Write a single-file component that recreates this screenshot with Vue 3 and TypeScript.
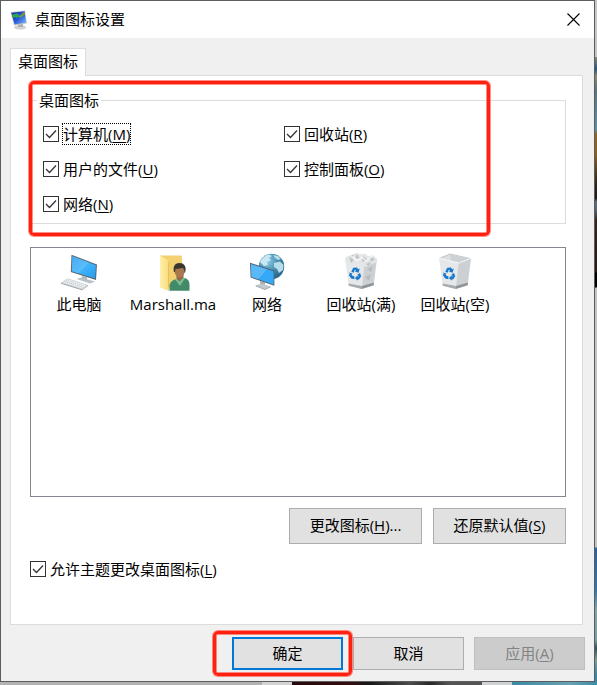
<script setup lang="ts">
import { reactive, ref } from 'vue'

interface DesktopOption {
  id: string
  label: string
  key: string
  checked: boolean
}

interface DesktopIcon {
  id: string
  label: string
}

const options = reactive<DesktopOption[]>([
  { id: 'computer', label: '计算机', key: 'M', checked: true },
  { id: 'recycle', label: '回收站', key: 'R', checked: true },
  { id: 'files', label: '用户的文件', key: 'U', checked: true },
  { id: 'control', label: '控制面板', key: 'O', checked: true },
  { id: 'network', label: '网络', key: 'N', checked: true },
])

const icons: DesktopIcon[] = [
  { id: 'pc', label: '此电脑' },
  { id: 'user', label: 'Marshall.ma' },
  { id: 'net', label: '网络' },
  { id: 'full', label: '回收站(满)' },
  { id: 'empty', label: '回收站(空)' },
]

const focused = ref('computer')
const allowThemes = ref(true)
</script>

<template>
  <div class="desktop">
    <main class="window">
      <header class="titlebar">
        <svg class="app-icon" viewBox="0 0 18 20" aria-hidden="true">
          <defs>
            <linearGradient id="app-screen" x1="0" y1="0" x2="1" y2="1">
              <stop offset="0" stop-color="#1b2f9c" />
              <stop offset="0.5" stop-color="#2456d8" />
              <stop offset="1" stop-color="#8fc2f8" />
            </linearGradient>
          </defs>
          <ellipse cx="10" cy="17.3" rx="6" ry="2.3" fill="#d2d2d2" />
          <path d="M8 14 L13 13 L13 17 L8 17Z" fill="#b0b0b0" />
          <path d="M0.5 2 L15 0.5 L17 13.5 L4 15.5Z" fill="#c8ccd0" />
          <path d="M1.3 2.8 L14.5 1.3 L16.2 12.7 L4.6 14.5Z" fill="url(#app-screen)" />
          <path d="M2 4.5 L8 3.5 L9 6 L7 8 L5 7 L3 8Z" fill="#2fa84a" />
          <path d="M8 7 L14 2 L15 4 L11 7.5Z" fill="#4db848" />
          <path d="M10.5 6.5 L14.3 2.5" stroke="#d9532c" stroke-width="1" />
        </svg>
        <h1 class="title">桌面图标设置</h1>
        <button class="close" type="button" aria-label="关闭">
          <svg viewBox="0 0 13 13" aria-hidden="true">
            <path d="M0.5 0.5 L12.5 12.5 M12.5 0.5 L0.5 12.5" stroke="#000" stroke-width="1.1" />
          </svg>
        </button>
      </header>

      <div class="body">
        <div class="tabs" role="tablist">
          <button class="tab" type="button" role="tab" aria-selected="true">桌面图标</button>
        </div>

        <section class="panel">
          <div class="group-wrap">
            <fieldset class="group">
              <legend>桌面图标</legend>
              <div class="options">
                <label v-for="o in options" :key="o.id" class="option">
                  <span class="tick">
                    <input v-model="o.checked" type="checkbox" @focus="focused = o.id" />
                    <svg v-show="o.checked" viewBox="0 0 16 16" aria-hidden="true">
                      <path d="M3 8 L6.5 11.5 L13 4.5" />
                    </svg>
                  </span>
                  <span class="caption" :class="{ focused: focused === o.id }">{{ o.label }}(<u>{{ o.key }}</u>)</span>
                </label>
              </div>
            </fieldset>
            <span class="mark mark-group"></span>
          </div>

          <ul class="icon-list">
            <li v-for="i in icons" :key="i.id" class="icon-item">
              <svg v-if="i.id === 'pc'" class="icon" viewBox="0 0 40 40" aria-hidden="true">
                <defs>
                  <linearGradient id="pc-screen" x1="0" y1="0" x2="1" y2="1">
                    <stop offset="0" stop-color="#2f9ff0" />
                    <stop offset="0.5" stop-color="#43b4fb" />
                    <stop offset="1" stop-color="#249cf0" />
                  </linearGradient>
                </defs>
                <path d="M23 24 L28 25.5 L28 29 L23 28Z" fill="#a9b2b8" />
                <path d="M17.5 27 L22 25.5 L36 29.5 L31 31.5Z" fill="#b9c2c8" />
                <path d="M12.5 2.8 L38 12.6 L37 28 L11.8 20Z" fill="#59666f" />
                <path d="M13.3 4 L37 13.2 L36 26.5 L12.8 19.2Z" fill="url(#pc-screen)" />
                <path d="M13.3 4 L30 10.5 L19 21.2 L12.8 19.2Z" fill="#fff" opacity="0.12" />
                <path d="M2 30.8 L8.5 26.3 L29 33 L23 37.2Z" fill="#cbd2d6" />
                <path d="M2 30.8 L23 37.2 L29 33 L29 34 L23 38.2 L2 31.8Z" fill="#98a3aa" />
                <path d="M4.5 30.2 L24.5 36.2 M6.3 28.8 L26.2 35 M8 27.6 L27.5 33.8" stroke="#fff" stroke-width="0.9" stroke-dasharray="1.6 0.6" />
              </svg>

              <svg v-else-if="i.id === 'user'" class="icon" viewBox="0 0 40 40" aria-hidden="true">
                <defs>
                  <linearGradient id="folder" x1="0" y1="0" x2="1" y2="0">
                    <stop offset="0" stop-color="#fff0ae" />
                    <stop offset="1" stop-color="#fbdc7b" />
                  </linearGradient>
                </defs>
                <path d="M7 3.5 H28 L29 4.5 V35.5 H7Z" fill="#f3d070" />
                <path d="M7 3.5 L13.8 7.5 Q15.5 8.5 15.5 10.5 V38.7 L7 35.6Z" fill="url(#folder)" />
                <path d="M15.5 10.5 V38.7" stroke="#d9b34f" stroke-width="0.6" />
                <path d="M16.5 38.7 V33.5 Q17 29 22.5 27.3 L32 26 Q36.3 27.5 36.5 32 V38.7Z" fill="#438b68" />
                <path d="M23.5 23 V27.5 L26.5 30.5 L30.5 26.5 V22Z" fill="#97683f" />
                <path d="M22 27.3 L23.5 26.5 L26.5 29.5 L30.5 25.5 L32 26.2 L27 34Z" fill="#74bf98" />
                <ellipse cx="26.6" cy="19.3" rx="4.8" ry="6.3" fill="#a97750" />
                <path d="M20.8 19.5 Q19.5 11.5 25.8 11 Q33.8 10.6 32.4 19.5 L31.3 21.5 Q31.6 17 29.5 15.8 Q25 17.2 22.6 16.4 L21.9 20.5Z" fill="#37362f" />
              </svg>

              <svg v-else-if="i.id === 'net'" class="icon" viewBox="0 0 40 40" aria-hidden="true">
                <defs>
                  <radialGradient id="globe" cx="0.35" cy="0.3" r="0.8">
                    <stop offset="0" stop-color="#8fcbe4" />
                    <stop offset="0.5" stop-color="#4590b4" />
                    <stop offset="1" stop-color="#1f5b80" />
                  </radialGradient>
                </defs>
                <circle cx="24.5" cy="14.5" r="12.7" fill="url(#globe)" />
                <path d="M13 10 Q16 4 22 2.5 L25 4 L22 6 L24 8 L20 10 L21 13 L17 14Z" fill="#c9e7f2" />
                <path d="M26 3 L31 4 L34 7 L31 8 L28 6Z M27 11 L33 9.5 L36.6 13 L36 18 L32 21 L30 17 L27 15Z" fill="#b9dcea" />
                <path d="M13 34 V29 L18 30.5 V35Z" fill="#aab3b9" />
                <path d="M8.7 33.3 L14 31.7 L23.5 34.3 L18 37Z" fill="#c2cace" />
                <path d="M8.7 33.3 L18 37 L23.5 34.3 V35.2 L18 38 L8.7 34.3Z" fill="#929da4" />
                <path d="M3 10.8 L27.4 18.6 V33.8 L3.6 25.6Z" fill="#50606b" />
                <path d="M3.8 12 L26.6 19.3 V32.4 L4.4 25Z" fill="#35a9f7" />
                <path d="M3.8 12 L20 17.2 L11 27.2 L4.4 25Z" fill="#fff" opacity="0.18" />
              </svg>

              <svg v-else class="icon" viewBox="0 0 40 40" aria-hidden="true">
                <path d="M4 6 L15 1.5 L36 6.3 L23.5 11Z" fill="#c2c5c9" />
                <path d="M6 6.2 L15.3 2.5 L33.7 6.5 L23.4 10Z" fill="#dcdee0" />
                <path d="M15.3 2.5 L16 8.3 L23.4 10 L33.7 6.5Z" fill="#ced1d4" />
                <path d="M4 6 L23.5 11 L20.7 37 L7.8 33.8Z" fill="#e5e7e9" />
                <path d="M23.5 11 L36 6.3 L32.7 33.3 L20.7 37Z" fill="#cdd0d3" />
                <path d="M7.5 31.5 L21 34 L20.7 37 L7.8 33.8Z" fill="#a7abae" />
                <path d="M21 34 L33 30.5 L32.7 33.3 L20.7 37Z" fill="#909497" />
                <path d="M4 6 L23.5 11 L36 6.3" fill="none" stroke="#fafafa" stroke-width="0.9" />
                <g v-if="i.id === 'full'">
                  <path d="M4.2 8 L7 3.5 L12 4.5 L15 0.8 L20 2.5 L24 1.5 L27 4 L33 3.5 L36 8 L34.5 11 L30 12 L25 15 L19 12 L13 13 L8 11Z" fill="#e4e6e7" />
                  <path d="M8 5 L13 8 L10 11Z M16 2 L19 7 L14 6Z M22 4 L27 8 L21 10Z M29 5 L34 7 L30 10Z M24 12 L30 10 L28 14Z" fill="#bfc4c6" />
                  <path d="M12 5 L16 9 L21 5 L25 9 L31 4" fill="none" stroke="#f8f9f9" stroke-width="1.1" />
                  <path d="M26 17 L32 14 L30 20Z M24 25 L30 22 L28 29Z" fill="#b7bcbf" />
                </g>
                <g transform="translate(14 21.3)" fill="#1878cd">
                  <path d="M-3.7 -1.5 L-1.8 -5.6 L2 -5.9 L3.2 -4 L4.8 -4.7 L3.5 -0.6 L-0.2 -1.9 L1 -2.6 L0 -3.7 L-1.4 -0.5Z" />
                  <path d="M-6.2 -0.8 L-2.4 0.2 L-3.5 1 L-2.3 2.8 L-0.6 3 L-0.6 6 L-3.8 5.3 L-6.2 1.7 L-5.1 0.4Z" />
                  <path d="M2.5 1.2 L5 -0.2 L6.2 3 L4 6.2 L2.6 6.3 L2.6 7.5 L0 4.6 L2.7 2 L2.7 3.5 L3.6 3Z" />
                </g>
              </svg>
              <span class="icon-label">{{ i.label }}</span>
            </li>
          </ul>

          <div class="actions">
            <button class="btn wide" type="button">更改图标(<u>H</u>)...</button>
            <button class="btn wide" type="button">还原默认值(<u>S</u>)</button>
          </div>

          <label class="option themes">
            <span class="tick">
              <input v-model="allowThemes" type="checkbox" />
              <svg v-show="allowThemes" viewBox="0 0 16 16" aria-hidden="true">
                <path d="M3 8 L6.5 11.5 L13 4.5" />
              </svg>
            </span>
            <span class="caption">允许主题更改桌面图标(<u>L</u>)</span>
          </label>
        </section>
      </div>

      <footer class="footer">
        <span class="primary-wrap">
          <button class="btn primary" type="button">确定</button>
          <span class="mark mark-ok"></span>
        </span>
        <button class="btn" type="button">取消</button>
        <button class="btn" type="button" disabled>应用(<u>A</u>)</button>
      </footer>
    </main>
    <div class="edge-right"></div>
    <div class="edge-bottom"></div>
  </div>
</template>

<style>
body {
  margin: 0;
}
</style>

<style scoped>
.desktop,
.desktop * {
  box-sizing: border-box;
}

.desktop {
  display: grid;
  grid-template-columns: 1fr 2px;
  grid-template-rows: 1fr 3px;
  min-height: 100vh;
  font: 15px/20px "Open Sans", "Noto Sans CJK SC", sans-serif;
  color: #000;
}

.edge-right {
  background: linear-gradient(
    #c6c6c6 0 57px, #8b8a78 57px, #215584 69px, #8c8970 76px, #5c7480 90px, #5a91a5 129px,
    #94651d 135px, #8b601c 155px, #352d1c 180px, #1b1a15 198px, #607078 202px, #50636b 211px,
    #37251b 220px, #281c14 272px, #000 273px 287px, #c3c3c3 288px 547px, #2862a0 548px,
    #3276ac 590px, #81a6a5 610px, #78a0a0 640px, #31535d 648px, #819b95 660px, #3189a9 675px
  );
}

.edge-bottom {
  grid-column: 1 / -1;
  background: linear-gradient(
    90deg,
    #b3b3b3 0 262px, #d3d3d3 262px 292px, #26090c 292px, #340d10 350px, #181818 370px,
    #4d4d4d 410px, #292929 430px, #555 450px 482px, #d0d3d3 482px 512px, #398aa5 512px,
    #67a3b1 570px, #398da9 597px
  );
}

.window {
  display: flex;
  flex-direction: column;
  min-width: 0;
  border: 1px solid #5d5c5e;
  background: #f0f0f0;
}

.titlebar {
  display: flex;
  align-items: center;
  height: 37px;
  padding-left: 9px;
  background: #fff;
}

.app-icon {
  width: 18px;
  height: 20px;
}

.title {
  flex: 1;
  margin: 0 0 0 7px;
  padding-bottom: 2px;
  font-size: 15px;
  font-weight: 400;
}

.close {
  display: grid;
  place-items: center;
  width: 42px;
  height: 36px;
  padding: 0;
  border: 0;
  background: none;
}

.close svg {
  width: 13px;
  height: 13px;
}

.body {
  display: flex;
  flex: 1;
  flex-direction: column;
  padding: 10px 11px 0 9px;
}

.tabs {
  display: flex;
  z-index: 1;
  margin-bottom: -1px;
}

.tab {
  height: 28px;
  padding: 0 7px 4px;
  border: 1px solid #dcdcdc;
  border-bottom: 0;
  background: #fff;
  font: inherit;
  color: inherit;
}

.panel {
  display: flex;
  flex: 1;
  flex-direction: column;
  padding: 14px 16px 44px 19px;
  border: 1px solid #dcdcdc;
  background: #fff;
}

.group-wrap,
.primary-wrap {
  position: relative;
}

.group {
  min-width: 0;
  margin: 0;
  padding: 13px 0 8px 12px;
  border: 1px solid #dcdcdc;
}

.group legend {
  margin-left: -6px;
  padding: 0 2px;
}

.options {
  display: grid;
  grid-template-columns: 6fr 7fr;
  row-gap: 13px;
}

.option {
  display: flex;
  align-items: center;
  gap: 3px;
  justify-self: start;
  height: 22px;
}

.tick {
  display: grid;
  width: 16px;
  height: 16px;
}

.tick input {
  grid-area: 1 / 1;
  appearance: none;
  width: 16px;
  height: 16px;
  margin: 0;
  border: 1px solid #333;
  background: #fff;
  outline: none;
}

.tick svg {
  grid-area: 1 / 1;
  width: 16px;
  height: 16px;
  pointer-events: none;
}

.tick path {
  fill: none;
  stroke: #333;
  stroke-width: 1.3;
}

.caption {
  border: 1px solid transparent;
  line-height: 20px;
  white-space: nowrap;
}

.caption.focused {
  border: 1px dotted #000;
}

u {
  text-decoration-thickness: 1px;
  text-underline-offset: 2px;
}

.mark {
  position: absolute;
  border: 3px solid #ff2010;
  border-radius: 5px;
  box-shadow: 0 0 0 1px #ff201080, inset 0 0 0 1px #ff201080;
  pointer-events: none;
}

.mark-group {
  inset: -9px 76px -12px -1px;
}

.mark-ok {
  inset: -6px -9px -6px -19px;
}

.icon-list {
  display: flex;
  flex: 1;
  flex-wrap: wrap;
  align-content: flex-start;
  min-height: 120px;
  margin: 23px 0 11px;
  padding: 4px 1px;
  border: 1px solid #828790;
  list-style: none;
}

.icon-item {
  display: flex;
  flex-direction: column;
  align-items: center;
  gap: 2px;
  width: 94px;
}

.icon {
  width: 40px;
  height: 40px;
}

.icon-label {
  white-space: nowrap;
}

.actions {
  display: flex;
  justify-content: flex-end;
  gap: 11px;
  margin-bottom: 14px;
}

.btn {
  width: 111px;
  height: 33px;
  padding: 0 0 2px;
  border: 1px solid #adadad;
  background: #e1e1e1;
  font: inherit;
  color: #000;
}

.btn.wide {
  width: 133px;
  height: 36px;
}

.btn.primary {
  display: block;
  border: 2px solid #0078d7;
}

.btn:disabled {
  border-color: #bfbfbf;
  background: #ccc;
  color: #838383;
}

.themes {
  align-self: flex-start;
}

.footer {
  display: flex;
  justify-content: flex-end;
  gap: 10px;
  padding: 12px 9px 11px;
}
</style>
